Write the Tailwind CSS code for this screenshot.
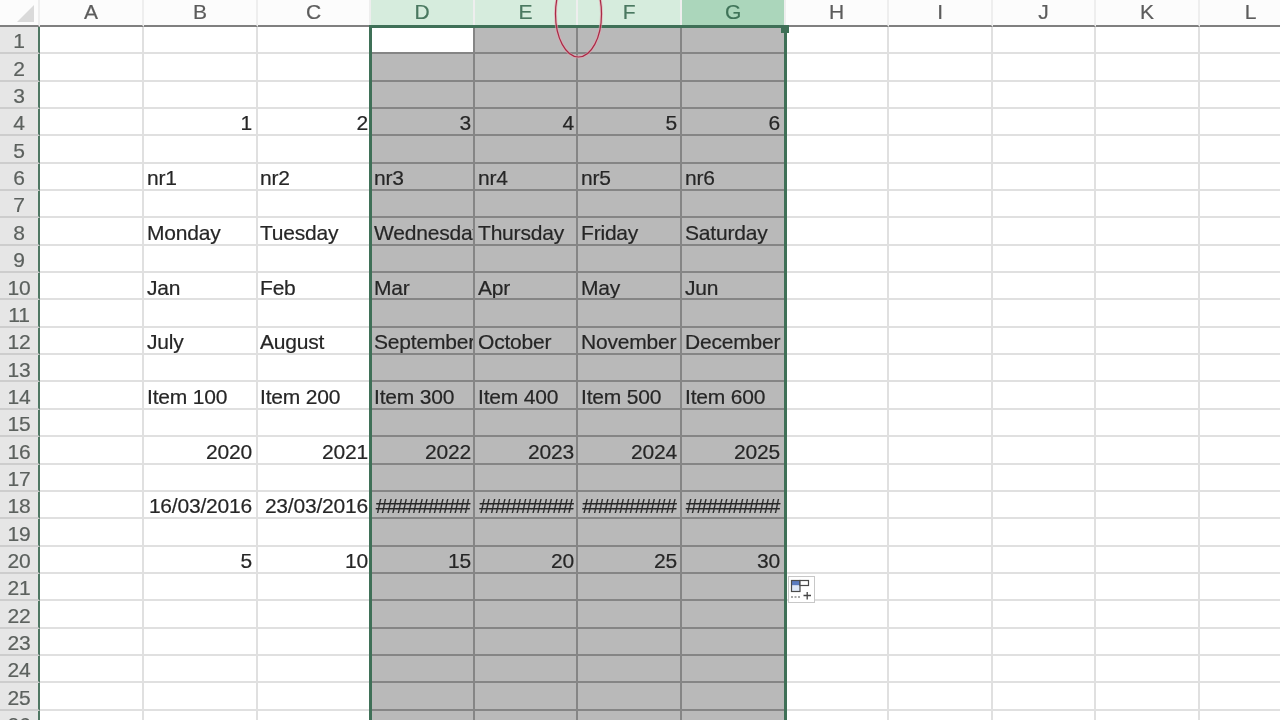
<!DOCTYPE html>
<html>
<head>
<meta charset="utf-8">
<script src="https://cdn.jsdelivr.net/npm/@tailwindcss/browser@4"></script>
</head>
<body class="m-0 bg-white">
<div class="relative w-[1280px] h-[720px] overflow-hidden bg-white font-['Liberation_Sans',Arial,sans-serif] text-[21px] tracking-[-0.2px] text-[#262626] blur-[0.5px] [-webkit-text-stroke:0.2px]">
  <div class="grid grid-cols-[40px_104px_114px_113px_104px_103px_104px_104px_103px_104px_103px_104px_103px] grid-rows-[27px] auto-rows-[27.35px] *:grid *:grid-cols-subgrid *:col-span-full *:*:flex *:*:items-center *:*:overflow-hidden *:*:whitespace-nowrap *:*:pl-[3px] *:*:pr-[3px] *:*:pt-[3px] *:*:border-r-2 *:*:border-b-2 *:*:border-[#e0e0e0] [&>div+div>div:nth-child(3)]:pr-[4px] [&>div+div>div:nth-child(4)]:pl-[2px] [&>div+div>div:nth-child(4)]:pr-[1px] [&>div+div>div:nth-child(5)]:pr-[2px] [&>div+div>div:nth-child(6)]:pr-[2px] [&>div+div>div:nth-child(8)]:pr-[4px] [&>div+div>div:nth-child(n+5):nth-child(-n+8)]:bg-[#b9b9b9] [&>div+div>div:nth-child(n+5):nth-child(-n+8)]:border-[#858585] [&>div+div>div:first-child]:justify-center [&>div+div>div:first-child]:bg-[#e6e6e6] [&>div+div>div:first-child]:text-[#5c615e] [&>div+div>div:first-child]:border-[#cdcdcd] [&>div+div>div:first-child]:border-r-[#4f7763] [&>div+div>div:first-child]:px-0">
    <div class="*:justify-center *:!pt-0 *:!pb-[2px] *:!border-b-[#808080] *:text-[#5c5c5c] *:bg-[#fcfcfc] *:!border-r-[#eeeeee]">
      <div class="!justify-end !items-end !pb-[3px] !px-[3px]"><svg width="20" height="20" viewBox="0 0 20 20"><polygon points="19,2 19,19 2,19" fill="#dadada"/></svg></div>
      <div>A</div><div>B</div><div>C</div>
      <div class="!bg-[#d6ecdd] !text-[#4a7860] !border-r-[#c6e2cf] !border-b-[#3f7057]">D</div>
      <div class="!bg-[#d6ecdd] !text-[#4a7860] !border-r-[#c6e2cf] !border-b-[#3f7057]">E</div>
      <div class="!bg-[#d6ecdd] !text-[#4a7860] !border-r-[#c6e2cf] !border-b-[#3f7057]">F</div>
      <div class="!bg-[#abd6bb] !text-[#3f7358] !border-r-[#abd6bb] !border-b-[#3f7057]">G</div>
      <div>H</div><div>I</div><div>J</div><div>K</div><div>L</div>
    </div>
    <div><div>1</div><div></div><div></div><div></div><div class="!bg-white"></div><div></div><div></div><div></div><div></div><div></div><div></div><div></div><div></div></div>
    <div><div>2</div><div></div><div></div><div></div><div></div><div></div><div></div><div></div><div></div><div></div><div></div><div></div><div></div></div>
    <div><div>3</div><div></div><div></div><div></div><div></div><div></div><div></div><div></div><div></div><div></div><div></div><div></div><div></div></div>
    <div class="*:justify-end"><div>4</div><div></div><div>1</div><div>2</div><div>3</div><div>4</div><div>5</div><div>6</div><div></div><div></div><div></div><div></div><div></div></div>
    <div><div>5</div><div></div><div></div><div></div><div></div><div></div><div></div><div></div><div></div><div></div><div></div><div></div><div></div></div>
    <div><div>6</div><div></div><div>nr1</div><div>nr2</div><div>nr3</div><div>nr4</div><div>nr5</div><div>nr6</div><div></div><div></div><div></div><div></div><div></div></div>
    <div><div>7</div><div></div><div></div><div></div><div></div><div></div><div></div><div></div><div></div><div></div><div></div><div></div><div></div></div>
    <div><div>8</div><div></div><div>Monday</div><div>Tuesday</div><div>Wednesday</div><div>Thursday</div><div>Friday</div><div>Saturday</div><div></div><div></div><div></div><div></div><div></div></div>
    <div><div>9</div><div></div><div></div><div></div><div></div><div></div><div></div><div></div><div></div><div></div><div></div><div></div><div></div></div>
    <div><div>10</div><div></div><div>Jan</div><div>Feb</div><div>Mar</div><div>Apr</div><div>May</div><div>Jun</div><div></div><div></div><div></div><div></div><div></div></div>
    <div><div>11</div><div></div><div></div><div></div><div></div><div></div><div></div><div></div><div></div><div></div><div></div><div></div><div></div></div>
    <div><div>12</div><div></div><div>July</div><div>August</div><div>September</div><div>October</div><div>November</div><div>December</div><div></div><div></div><div></div><div></div><div></div></div>
    <div><div>13</div><div></div><div></div><div></div><div></div><div></div><div></div><div></div><div></div><div></div><div></div><div></div><div></div></div>
    <div><div>14</div><div></div><div>Item 100</div><div>Item 200</div><div>Item 300</div><div>Item 400</div><div>Item 500</div><div>Item 600</div><div></div><div></div><div></div><div></div><div></div></div>
    <div><div>15</div><div></div><div></div><div></div><div></div><div></div><div></div><div></div><div></div><div></div><div></div><div></div><div></div></div>
    <div class="*:justify-end"><div>16</div><div></div><div>2020</div><div>2021</div><div>2022</div><div>2023</div><div>2024</div><div>2025</div><div></div><div></div><div></div><div></div><div></div></div>
    <div><div>17</div><div></div><div></div><div></div><div></div><div></div><div></div><div></div><div></div><div></div><div></div><div></div><div></div></div>
    <div class="*:justify-center"><div>18</div><div></div><div class="!justify-end">16/03/2016</div><div class="!justify-end">23/03/2016</div><div class="tracking-[-1.3px]">#########</div><div class="tracking-[-1.3px]">#########</div><div class="tracking-[-1.3px]">#########</div><div class="tracking-[-1.3px]">#########</div><div></div><div></div><div></div><div></div><div></div></div>
    <div><div>19</div><div></div><div></div><div></div><div></div><div></div><div></div><div></div><div></div><div></div><div></div><div></div><div></div></div>
    <div class="*:justify-end"><div>20</div><div></div><div>5</div><div>10</div><div>15</div><div>20</div><div>25</div><div>30</div><div></div><div></div><div></div><div></div><div></div></div>
    <div><div>21</div><div></div><div></div><div></div><div></div><div></div><div></div><div></div><div></div><div></div><div></div><div></div><div></div></div>
    <div><div>22</div><div></div><div></div><div></div><div></div><div></div><div></div><div></div><div></div><div></div><div></div><div></div><div></div></div>
    <div><div>23</div><div></div><div></div><div></div><div></div><div></div><div></div><div></div><div></div><div></div><div></div><div></div><div></div></div>
    <div><div>24</div><div></div><div></div><div></div><div></div><div></div><div></div><div></div><div></div><div></div><div></div><div></div><div></div></div>
    <div><div>25</div><div></div><div></div><div></div><div></div><div></div><div></div><div></div><div></div><div></div><div></div><div></div><div></div></div>
    <div><div>26</div><div></div><div></div><div></div><div></div><div></div><div></div><div></div><div></div><div></div><div></div><div></div><div></div></div>
  </div>

  <!-- selection outline -->
  <div class="absolute left-[369px] top-[25px] w-[418px] h-[700px] border-[3px] border-b-0 border-[#3f7057]"></div>
  <div class="absolute left-[781px] top-[25px] w-[8px] h-[8px] bg-[#3f7057]"></div>

  <!-- red hand-drawn ellipse -->
  <svg class="absolute left-[550px] top-0" width="60" height="62" viewBox="0 0 60 62" fill="none">
    <ellipse cx="28.5" cy="14" rx="23" ry="43" stroke="#e8a3b3" stroke-opacity="0.6" stroke-width="3"/>
    <ellipse cx="28.5" cy="14" rx="23" ry="43" stroke="#a92a45" stroke-width="1.2"/>
  </svg>

  <!-- quick analysis button -->
  <div class="absolute left-[788px] top-[576px] w-[27px] h-[27px] bg-white border border-[#c8c8c8]">
    <svg width="25" height="25" viewBox="0 0 25 25" fill="none">
      <rect x="2.5" y="3.5" width="8.5" height="5" fill="#5b7cc0"/>
      <rect x="2.5" y="8.5" width="8.5" height="6" fill="#dfe8f7"/>
      <rect x="2.5" y="3.5" width="8.5" height="11" stroke="#4a4a4a" stroke-width="1.2" fill="none"/>
      <rect x="11" y="3.5" width="8.5" height="5" stroke="#4a4a4a" stroke-width="1.2" fill="#fff"/>
      <path d="M2 20h10" stroke="#555" stroke-width="1.2" stroke-dasharray="2 1.5"/>
      <path d="M14.5 18.5h7.5M18.2 15v7.5" stroke="#444" stroke-width="1.3"/>
    </svg>
  </div>
</div>
</body>
</html>
